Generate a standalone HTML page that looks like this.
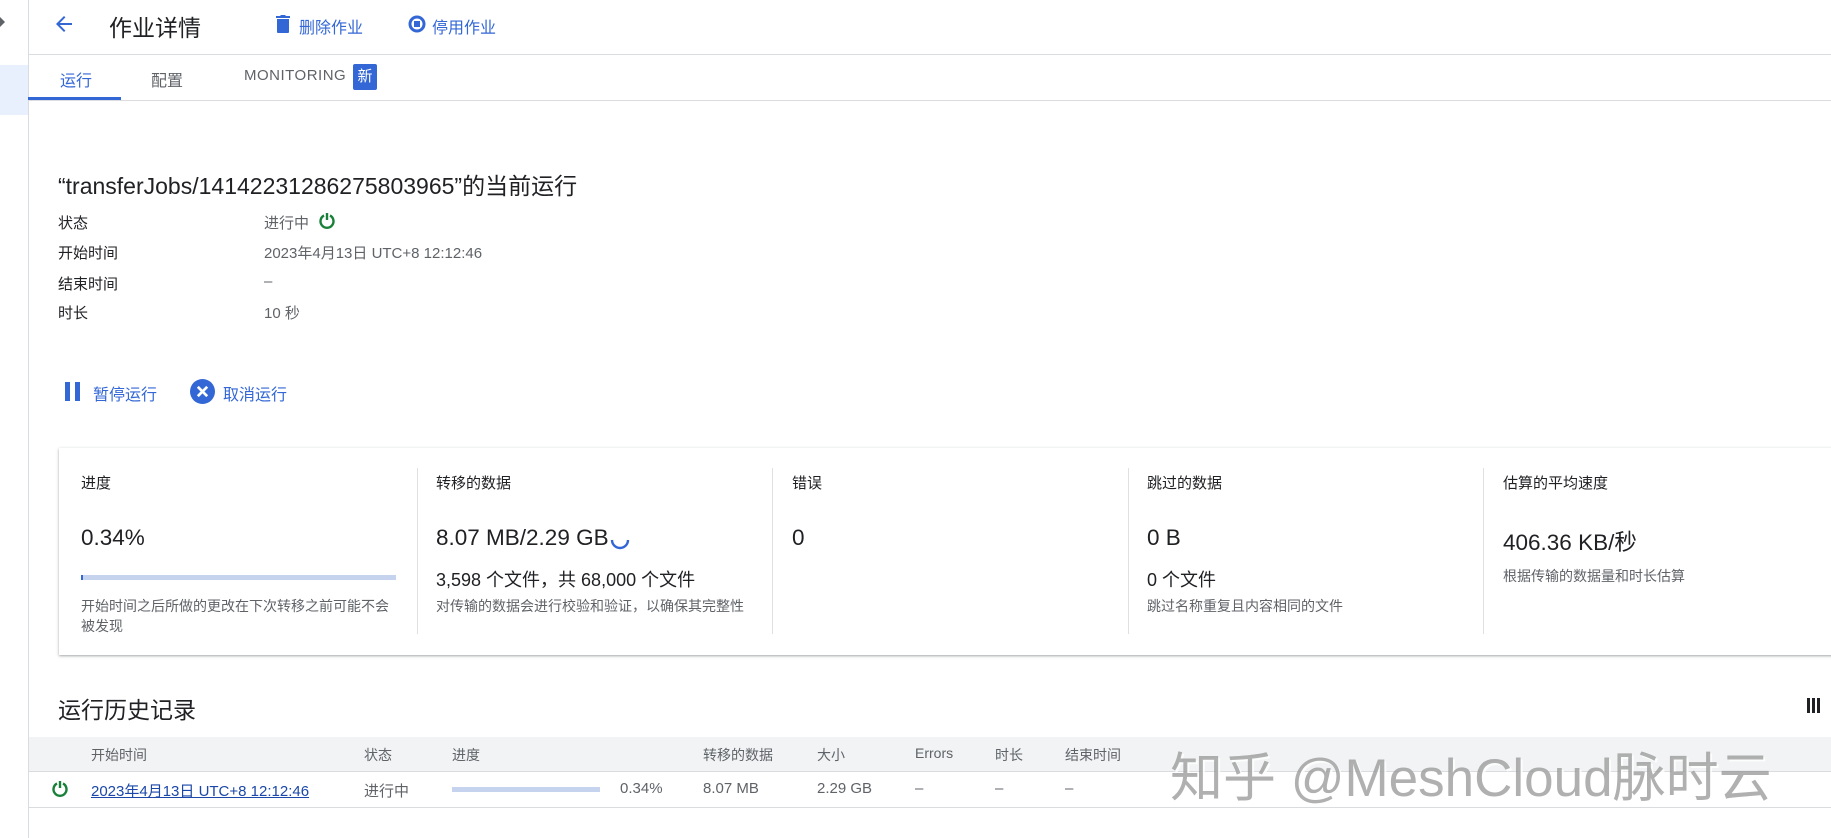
<!DOCTYPE html>
<html><head><meta charset="utf-8"><style>
*{margin:0;padding:0;box-sizing:border-box}
body{width:1831px;height:838px;overflow:hidden;background:#fff;font-family:"Liberation Sans","Noto Sans CJK SC",sans-serif;color:#202124;position:relative}
.a{position:absolute;white-space:nowrap}
.blue{color:#3367d6}
.gray{color:#5f6368}
</style></head><body>
<div class="a" style="left:28px;top:0;width:1px;height:838px;background:#dadce0"></div>
<div class="a" style="left:0;top:65px;width:28px;height:50px;background:#e8f0fe"></div>
<div class="a" style="left:0;top:17px;width:0;height:0;border-top:5px solid transparent;border-bottom:5px solid transparent;border-left:5px solid #5f6368"></div>
<svg class="a" style="left:52px;top:12px" width="24" height="24" viewBox="0 0 24 24"><path d="M20 11H7.8l5.6-5.6L12 4l-8 8 8 8 1.4-1.4L7.8 13H20z" fill="#3367d6"/></svg>
<div class="a" style="left:109px;top:9px;font-size:23px">作业详情</div>
<svg class="a" style="left:274px;top:14px" width="18" height="20" viewBox="0 0 18 20"><path d="M3 5h12v13a1 1 0 0 1-1 1H4a1 1 0 0 1-1-1zM2 2h4l1-1h4l1 1h4v2H2z" fill="#3367d6"/></svg>
<div class="a blue" style="left:299px;top:14px;font-size:16px">删除作业</div>
<svg class="a" style="left:408px;top:15px" width="18" height="18" viewBox="0 0 18 18"><circle cx="9" cy="9" r="7" fill="none" stroke="#3367d6" stroke-width="3"/><rect x="6" y="6" width="6" height="6" fill="#3367d6"/></svg>
<div class="a blue" style="left:432px;top:14px;font-size:16px">停用作业</div>
<div class="a" style="left:29px;top:54px;width:1802px;height:1px;background:#dadce0"></div>
<div class="a blue" style="left:60px;top:67px;font-size:16px">运行</div>
<div class="a gray" style="left:151px;top:67px;font-size:16px">配置</div>
<div class="a gray" style="left:244px;top:67px;font-size:15px;letter-spacing:.5px">MONITORING</div>
<div class="a" style="left:353px;top:64px;width:24px;height:26px;background:#3367d6;color:#fff;font-size:15px;text-align:center;line-height:26px;border-radius:2px">新</div>
<div class="a" style="left:28px;top:97px;width:93px;height:3px;background:#3367d6"></div>
<div class="a" style="left:29px;top:100px;width:1802px;height:1px;background:#dadce0"></div>
<div class="a" style="left:58px;top:167px;font-size:23px">“transferJobs/14142231286275803965”的当前运行</div>
<div class="a" style="left:58px;top:212px;font-size:15px">状态</div>
<div class="a gray" style="left:264px;top:212px;font-size:15px">进行中</div>
<svg class="a" style="left:318px;top:212px" width="18" height="18" viewBox="0 0 18 18"><path d="M12 3.5A6.5 6.5 0 1 1 6 3.5" fill="none" stroke="#188038" stroke-width="2.4"/><path d="M9 1v7" stroke="#188038" stroke-width="2.4"/></svg>
<div class="a" style="left:58px;top:242px;font-size:15px">开始时间</div>
<div class="a gray" style="left:264px;top:242px;font-size:15px">2023年4月13日 UTC+8 12:12:46</div>
<div class="a" style="left:58px;top:273px;font-size:15px">结束时间</div>
<div class="a gray" style="left:264px;top:273px;font-size:15px">–</div>
<div class="a" style="left:58px;top:302px;font-size:15px">时长</div>
<div class="a gray" style="left:264px;top:302px;font-size:15px">10 秒</div>
<div class="a" style="left:65px;top:382px;width:5px;height:19px;background:#3367d6"></div>
<div class="a" style="left:75px;top:382px;width:5px;height:19px;background:#3367d6"></div>
<div class="a blue" style="left:93px;top:381px;font-size:16px">暂停运行</div>
<svg class="a" style="left:190px;top:379px" width="25" height="25" viewBox="0 0 24 24"><circle cx="12" cy="12" r="12" fill="#3367d6"/><path d="M7.5 7.5l9 9M16.5 7.5l-9 9" stroke="#fff" stroke-width="2.6"/></svg>
<div class="a blue" style="left:223px;top:381px;font-size:16px">取消运行</div>
<div class="a" style="left:59px;top:448px;width:1790px;height:207px;background:#fff;box-shadow:0 1px 2px rgba(60,64,67,.35),0 1px 4px rgba(60,64,67,.15)"></div>
<div class="a" style="left:417px;top:468px;width:1px;height:166px;background:#e0e0e0"></div>
<div class="a" style="left:772px;top:468px;width:1px;height:166px;background:#e0e0e0"></div>
<div class="a" style="left:1128px;top:468px;width:1px;height:166px;background:#e0e0e0"></div>
<div class="a" style="left:1483px;top:468px;width:1px;height:166px;background:#e0e0e0"></div>
<div class="a" style="left:81px;top:472px;font-size:15px">进度</div>
<div class="a" style="left:81px;top:525px;font-size:22.5px">0.34%</div>
<div class="a" style="left:81px;top:575px;width:315px;height:5px;background:#c5d3ee"></div>
<div class="a" style="left:81px;top:575px;width:2px;height:5px;background:#3367d6"></div>
<div class="a gray" style="left:81px;top:596px;font-size:14px;line-height:20px;white-space:normal;width:315px">开始时间之后所做的更改在下次转移之前可能不会被发现</div>
<div class="a" style="left:436px;top:525px;font-size:22.5px">8.07 MB/2.29 GB</div>
<div class="a" style="left:436px;top:472px;font-size:15px">转移的数据</div>
<svg class="a" style="left:608px;top:528px" width="24" height="24" viewBox="0 0 24 24"><path d="M4 12a8 8 0 0 0 16 0" fill="none" stroke="#3367d6" stroke-width="2.4"/></svg>
<div class="a" style="left:436px;top:566px;font-size:18px">3,598 个文件，共 68,000 个文件</div>
<div class="a gray" style="left:436px;top:596px;font-size:14px;line-height:20px;white-space:normal;width:315px">对传输的数据会进行校验和验证，以确保其完整性</div>
<div class="a" style="left:792px;top:472px;font-size:15px">错误</div>
<div class="a" style="left:792px;top:525px;font-size:22.5px">0</div>
<div class="a" style="left:1147px;top:472px;font-size:15px">跳过的数据</div>
<div class="a" style="left:1147px;top:525px;font-size:22.5px">0 B</div>
<div class="a" style="left:1147px;top:566px;font-size:18px">0 个文件</div>
<div class="a gray" style="left:1147px;top:596px;font-size:14px">跳过名称重复且内容相同的文件</div>
<div class="a" style="left:1503px;top:472px;font-size:15px">估算的平均速度</div>
<div class="a" style="left:1503px;top:525px;font-size:22.5px">406.36 KB/秒</div>
<div class="a gray" style="left:1503px;top:566px;font-size:14px">根据传输的数据量和时长估算</div>
<div class="a" style="left:58px;top:691px;font-size:23px">运行历史记录</div>
<div class="a" style="left:1807px;top:698px;width:3px;height:15px;background:#202124"></div>
<div class="a" style="left:1812px;top:698px;width:3px;height:15px;background:#202124"></div>
<div class="a" style="left:1817px;top:698px;width:3px;height:15px;background:#202124"></div>
<div class="a" style="left:29px;top:737px;width:1802px;height:35px;background:#f1f3f4;border-bottom:1px solid #dadce0"></div>
<div class="a gray" style="left:91px;top:745px;font-size:14px">开始时间</div>
<div class="a gray" style="left:364px;top:745px;font-size:14px">状态</div>
<div class="a gray" style="left:452px;top:745px;font-size:14px">进度</div>
<div class="a gray" style="left:703px;top:745px;font-size:14px">转移的数据</div>
<div class="a gray" style="left:817px;top:745px;font-size:14px">大小</div>
<div class="a gray" style="left:915px;top:745px;font-size:14px">Errors</div>
<div class="a gray" style="left:995px;top:745px;font-size:14px">时长</div>
<div class="a gray" style="left:1065px;top:745px;font-size:14px">结束时间</div>
<svg class="a" style="left:51px;top:780px" width="18" height="18" viewBox="0 0 18 18"><path d="M12 3.5A6.5 6.5 0 1 1 6 3.5" fill="none" stroke="#188038" stroke-width="2.4"/><path d="M9 1v7" stroke="#188038" stroke-width="2.4"/></svg>
<div class="a" style="left:91px;top:780px;font-size:15px;color:#1a47a8;text-decoration:underline">2023年4月13日 UTC+8 12:12:46</div>
<div class="a gray" style="left:364px;top:780px;font-size:15px">进行中</div>
<div class="a" style="left:452px;top:787px;width:148px;height:5px;background:#c5d3ee"></div>
<div class="a gray" style="left:620px;top:780px;font-size:15px">0.34%</div>
<div class="a gray" style="left:703px;top:780px;font-size:15px">8.07 MB</div>
<div class="a gray" style="left:817px;top:780px;font-size:15px">2.29 GB</div>
<div class="a gray" style="left:915px;top:780px;font-size:15px">–</div>
<div class="a gray" style="left:995px;top:780px;font-size:15px">–</div>
<div class="a gray" style="left:1065px;top:780px;font-size:15px">–</div>
<div class="a" style="left:29px;top:807px;width:1802px;height:1px;background:#dadce0"></div>
<div class="a" style="left:1170px;top:736px;font-size:53px;color:rgba(150,150,150,.75);text-shadow:2px 2px 0 rgba(255,255,255,.8)">知乎 @MeshCloud脉时云</div>
</body></html>
